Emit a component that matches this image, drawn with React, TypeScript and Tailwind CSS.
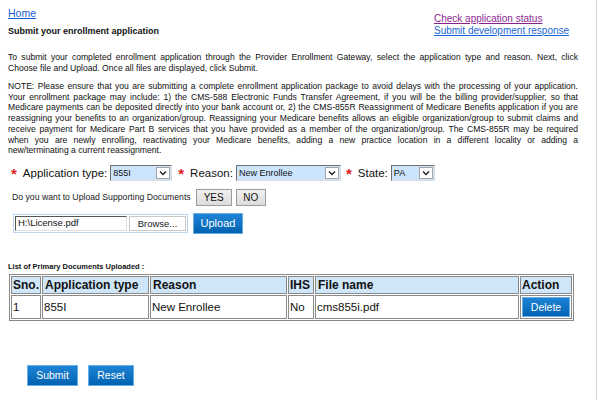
import { ReactNode } from "react";

const noteLines = [
  "NOTE: Please ensure that you are submitting a complete enrollment application package to avoid delays with the processing of your application.",
  "Your enrollment package may include: 1) the CMS-588 Electronic Funds Transfer Agreement, if you will be the billing provider/supplier, so that",
  "Medicare payments can be deposited directly into your bank account or, 2) the CMS-855R Reassignment of Medicare Benefits application if you are",
  "reassigning your benefits to an organization/group. Reassigning your Medicare benefits allows an eligible organization/group to submit claims and",
  "receive payment for Medicare Part B services that you have provided as a member of the organization/group. The CMS-855R may be required",
  "when you are newly enrolling, reactivating your Medicare benefits, adding a new practice location in a different locality or adding a",
];

// one justified line, so the breaks match the original page
function Line({ children }: { children: ReactNode }) {
  return <div className="whitespace-nowrap text-justify [text-align-last:justify]">{children}</div>;
}

function FakeSelect({ width, value }: { width: string; value: string }) {
  return (
    <div
      className={`${width} flex h-[16px] items-center justify-between border border-b-[#dcdcdc] border-l-[#6f6f6f] border-r-[#dcdcdc] border-t-[#6f6f6f] bg-[#cde5fc] pr-[1px]`}
    >
      <span className="pl-[2px] text-[9px] leading-[12px] text-[#111]">{value}</span>
      <span className="flex h-[12px] w-[14px] items-center justify-center border border-[#a6a6a6] bg-white">
        <svg width="8" height="6" viewBox="0 0 8 6">
          <path d="M1 1.5 L4 4.5 L7 1.5" fill="none" stroke="#222" strokeWidth="1.4" />
        </svg>
      </span>
    </div>
  );
}

function BlueButton({ label, className }: { label: string; className: string }) {
  return (
    <button
      className={`${className} border border-[#6aaee6] bg-gradient-to-b from-[#1e84d6] to-[#0062b1] font-['Liberation_Sans',Arial,sans-serif] text-white`}
    >
      {label}
    </button>
  );
}

function GrayButton({ label, className }: { label: string; className: string }) {
  return (
    <button
      className={`${className} border border-[#9c9c9c] bg-gradient-to-b from-[#f0f0f0] to-[#dcdcdc] text-[10px] text-[#111]`}
    >
      {label}
    </button>
  );
}

function Required({ label }: { label: string }) {
  return (
    <span className="flex items-center">
      <span className="mr-[6px] pt-[3px] text-[15px] font-bold leading-[16px] text-[#e0201c]">*</span>
      <span className="mr-[3px] text-[11.5px] leading-[16px] text-[#111]">{label}</span>
    </span>
  );
}

export default function App() {
  return (
    <div className="h-[400px] w-[597px] border-r border-[#d2d2d2] bg-white pl-2 pr-[18px] font-['Liberation_Sans',Arial,sans-serif] text-[#111]">
      {/* top bar */}
      <div className="flex pt-[7px]">
        <div className="w-[426px]">
          <a href="#" className="block text-[10.5px] leading-[12px] text-[#1560cf] underline">
            Home
          </a>
          <h1 className="mt-[7px] text-[9px] font-bold leading-[11px]">Submit your enrollment application</h1>
        </div>
        <div className="flex flex-col pt-[6px] text-[10px] leading-[12px]">
          <a href="#" className="text-[#8e1f93] underline">Check application status</a>
          <a href="#" className="text-[#1767d4] underline">Submit development response</a>
        </div>
      </div>

      {/* instructions */}
      <div className="mt-[15px] text-[8.6px] leading-[11px]">
        <Line>
          To submit your completed enrollment application through the Provider Enrollment Gateway, select the
          application type and reason. Next, click
        </Line>
        <div>Choose file and Upload. Once all files are displayed, click Submit.</div>
      </div>

      <div className="mt-[7px] text-[8.6px] leading-[10.7px]">
        {noteLines.map((l) => (
          <Line key={l}>{l}</Line>
        ))}
        <div>new/terminating a current reassignment.</div>
      </div>

      {/* application type / reason / state */}
      <div className="ml-[3px] mt-[9px] flex h-[16px] items-center">
        <Required label="Application type:" />
        <FakeSelect width="w-[62px]" value="855I" />
        <span className="ml-[6px]" />
        <Required label="Reason:" />
        <FakeSelect width="w-[105px]" value="New Enrollee" />
        <span className="ml-[5px]" />
        <Required label="State:" />
        <FakeSelect width="w-[44px]" value="PA" />
      </div>

      <div className="ml-[4px] mt-[8px] flex h-[17px] items-center">
        <span className="mr-[5px] text-[8.7px] text-[#222]">Do you want to Upload Supporting Documents</span>
        <GrayButton label="YES" className="h-[17px] w-[36px]" />
        <GrayButton label="NO" className="ml-[4px] h-[17px] w-[30px]" />
      </div>

      {/* file picker */}
      <div className="ml-[5px] mt-[7px] flex h-[21px] items-center">
        <div className="flex h-[19px] w-[175px] items-center border border-[#b9d7f0] bg-white p-[1px]">
          <div className="flex h-full w-[112px] items-center border border-b-[#e0e0e0] border-l-[#555] border-r-[#e0e0e0] border-t-[#555] pl-[2px] text-[9.5px]">
            H:\License.pdf
          </div>
          <button className="ml-[2px] h-full flex-1 border border-[#c8c8c8] bg-white text-[9.5px] text-[#222]">
            Browse...
          </button>
        </div>
        <BlueButton label="Upload" className="ml-[5px] h-[21px] w-[50px] text-[11px]" />
      </div>

      {/* uploaded list */}
      <div className="mt-[28px] text-[7.5px] font-bold leading-[9px]">List of Primary Documents Uploaded :</div>
      <table className="ml-[1px] mt-[3px] w-[565px] table-fixed border-separate border-spacing-[1px] border border-[#8a8a8a]">
        <thead>
          <tr className="text-left text-[12px] font-bold leading-[16px]">
            <th className="w-[30px] border border-[#8a8a8a] bg-[#cfe5f8] px-[1px]">Sno.</th>
            <th className="w-[107px] border border-[#8a8a8a] bg-[#cfe5f8] px-[2px]">Application type</th>
            <th className="w-[137px] border border-[#8a8a8a] bg-[#cfe5f8] px-[2px]">Reason</th>
            <th className="w-[26px] border border-[#8a8a8a] bg-[#cfe5f8] px-[1px]">IHS</th>
            <th className="w-[204px] border border-[#8a8a8a] bg-[#cfe5f8] px-[2px]">File name</th>
            <th className="w-[52px] border border-[#8a8a8a] bg-[#cfe5f8] px-[1px]">Action</th>
          </tr>
        </thead>
        <tbody>
          <tr className="text-[11.5px] leading-[14px]">
            <td className="border border-[#8a8a8a] px-[1px]">1</td>
            <td className="border border-[#8a8a8a] px-[1px]">855I</td>
            <td className="border border-[#8a8a8a] px-[1px]">New Enrollee</td>
            <td className="border border-[#8a8a8a] px-[1px]">No</td>
            <td className="border border-[#8a8a8a] px-[1px]">cms855i.pdf</td>
            <td className="border border-[#8a8a8a] p-[1px]">
              <BlueButton label="Delete" className="block h-[20px] w-full text-[10.5px]" />
            </td>
          </tr>
        </tbody>
      </table>

      {/* submit / reset */}
      <div className="ml-[19px] mt-[44px] flex gap-[10px]">
        <BlueButton label="Submit" className="h-[21px] w-[51px] text-[10.5px]" />
        <BlueButton label="Reset" className="h-[21px] w-[46px] text-[10.5px]" />
      </div>
    </div>
  );
}
